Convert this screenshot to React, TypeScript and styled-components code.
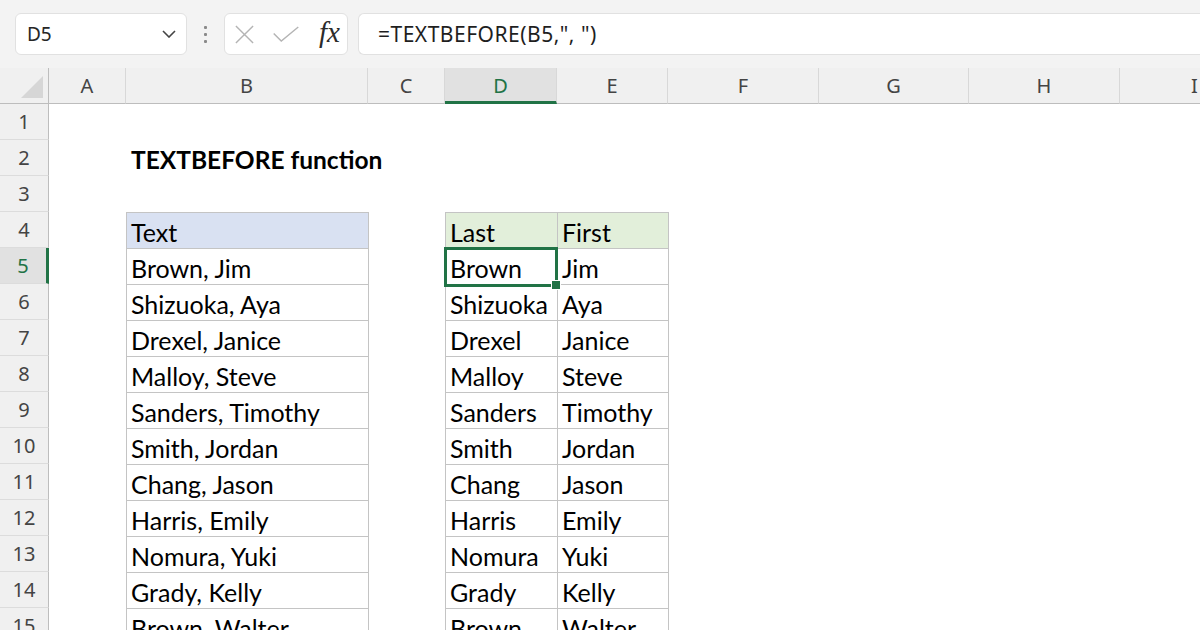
import React from "react";
import styled, { createGlobalStyle, css } from "styled-components";

const Global = createGlobalStyle`
  html, body { margin: 0; padding: 0; background: #ffffff; }
  body { overflow: hidden; }
  #root { width: 1200px; height: 630px; }
`;

const GREEN = "#217346";
const UI_FONT = `"Noto Sans", "Open Sans", "DejaVu Sans", sans-serif`;
const CELL_FONT = `Lato, "Noto Sans", sans-serif`;

const Frame = styled.div`
  width: 1200px;
  height: 630px;
  overflow: hidden;
  background: #ffffff;
  display: flex;
  flex-direction: column;
`;

const TopBar = styled.div`
  height: 68px;
  flex: none;
  box-sizing: border-box;
  background: #f3f3f3;
  display: flex;
  align-items: center;
  padding: 0 0 0 15px;
`;

const Box = styled.div`
  height: 42px;
  box-sizing: border-box;
  background: #ffffff;
  border: 1px solid #e1e1e1;
  border-radius: 6px;
  display: flex;
  align-items: center;
`;

const NameBox = styled(Box)`
  width: 172px;
  padding: 0 10px 0 11px;
  justify-content: space-between;
  font-family: ${UI_FONT};
  font-size: 19px;
  color: #262626;
`;

const Dots = styled.div`
  width: 37px;
  display: flex;
  flex-direction: column;
  align-items: center;
  gap: 4px;
  span {
    width: 3px;
    height: 3px;
    background: #8a8a8a;
    border-radius: 1px;
  }
`;

const FxBox = styled(Box)`
  width: 124px;
  padding: 0 7px 0 9px;
  gap: 17px;
  margin-right: 10px;
`;

const FxText = styled.span`
  font-family: "Liberation Serif", "DejaVu Serif", serif;
  font-style: italic;
  font-size: 29px;
  color: #2b2b2b;
  margin-left: auto;
  margin-top: -4px;
  letter-spacing: 0px;
`;

const FormulaBox = styled(Box)`
  flex: 1;
  border-right: none;
  border-radius: 6px 0 0 6px;
  padding-left: 19px;
  font-family: ${UI_FONT};
  font-size: 21px;
  color: #1f1f1f;
  letter-spacing: 0.5px;
`;

const Sheet = styled.div`
  display: grid;
  grid-template-columns: 49px 77px 242px 77px 112px 111px 151px 150px 151px 150px;
  grid-auto-rows: 36px;
  width: 1270px;
`;

const Corner = styled.div`
  position: relative;
  background: #f0f0f0;
  border-right: 1px solid #bdbdbd;
  border-bottom: 1px solid #bdbdbd;
  svg { position: absolute; right: 5px; bottom: 5px; }
`;

const ColHead = styled.div<{ $active?: boolean }>`
  background: ${(p) => (p.$active ? "#e1e1e1" : "#f0f0f0")};
  border-right: 1px solid #d8d8d8;
  border-bottom: ${(p) => (p.$active ? `3px solid ${GREEN}` : "1px solid #bdbdbd")};
  box-sizing: border-box;
  display: flex;
  align-items: center;
  justify-content: center;
  padding-top: ${(p) => (p.$active ? "2px" : "0")};
  font-family: ${UI_FONT};
  font-size: 20px;
  color: ${(p) => (p.$active ? GREEN : "#444444")};
`;

const RowHead = styled.div<{ $active?: boolean }>`
  background: ${(p) => (p.$active ? "#e1e1e1" : "#f0f0f0")};
  border-right: ${(p) => (p.$active ? `3px solid ${GREEN}` : "1px solid #bdbdbd")};
  border-bottom: 1px solid #dcdcdc;
  box-sizing: border-box;
  display: flex;
  align-items: center;
  justify-content: center;
  font-family: ${UI_FONT};
  font-size: 20px;
  color: ${(p) => (p.$active ? GREEN : "#444444")};
`;

type Variant = "none" | "plain" | "blue" | "green";

const Cell = styled.div<{ $variant: Variant; $bold?: boolean }>`
  position: relative;
  box-sizing: border-box;
  display: flex;
  align-items: center;
  padding: 2px 0 0 5px;
  white-space: nowrap;
  overflow: visible;
  font-family: ${CELL_FONT};
  font-size: ${(p) => (p.$bold ? "24.5px" : "25px")};
  font-weight: ${(p) => (p.$bold ? 700 : 400)};
  color: #000000;
  ${(p) =>
    p.$variant !== "none" &&
    css`
      border: 1px solid #c4c4c4;
      margin: 0 -1px -1px 0;
      padding-left: 4px;
      background: ${p.$variant === "blue"
        ? "#d9e1f2"
        : p.$variant === "green"
        ? "#e2efda"
        : "#ffffff"};
    `}
`;

const Selection = styled.div`
  position: absolute;
  left: -2px;
  top: -2px;
  width: 114px;
  height: 40px;
  box-sizing: border-box;
  border: 3px solid ${GREEN};
  z-index: 2;
  pointer-events: none;
`;

const Handle = styled.div`
  position: absolute;
  right: -6px;
  bottom: -6px;
  width: 8px;
  height: 8px;
  background: ${GREEN};
  border: 1px solid #ffffff;
`;

const COLS = ["A", "B", "C", "D", "E", "F", "G", "H", "I"];

const names: [string, string, string][] = [
  ["Brown, Jim", "Brown", "Jim"],
  ["Shizuoka, Aya", "Shizuoka", "Aya"],
  ["Drexel, Janice", "Drexel", "Janice"],
  ["Malloy, Steve", "Malloy", "Steve"],
  ["Sanders, Timothy", "Sanders", "Timothy"],
  ["Smith, Jordan", "Smith", "Jordan"],
  ["Chang, Jason", "Chang", "Jason"],
  ["Harris, Emily", "Harris", "Emily"],
  ["Nomura, Yuki", "Nomura", "Yuki"],
  ["Grady, Kelly", "Grady", "Kelly"],
  ["Brown, Walter", "Brown", "Walter"],
];

type CellInfo = { text?: string; variant: Variant; bold?: boolean };

function cellAt(row: number, col: string): CellInfo {
  if (row === 2 && col === "B") return { text: "TEXTBEFORE function", variant: "none", bold: true };
  if (row === 4) {
    if (col === "B") return { text: "Text", variant: "blue" };
    if (col === "D") return { text: "Last", variant: "green" };
    if (col === "E") return { text: "First", variant: "green" };
  }
  if (row >= 5 && row <= 15) {
    const r = names[row - 5];
    if (col === "B") return { text: r[0], variant: "plain" };
    if (col === "D") return { text: r[1], variant: "plain" };
    if (col === "E") return { text: r[2], variant: "plain" };
  }
  return { variant: "none" };
}

const ChevronIcon = () => (
  <svg width="14" height="8" viewBox="0 0 14 8" fill="none">
    <path d="M1 1 L7 7 L13 1" stroke="#444" strokeWidth="1.6" />
  </svg>
);

const CrossIcon = () => (
  <svg width="21" height="21" viewBox="0 0 22 22" fill="none">
    <path d="M2 2 L20 20 M20 2 L2 20" stroke="#b4b4b4" strokeWidth="1.5" />
  </svg>
);

const CheckIcon = () => (
  <svg width="28" height="17" viewBox="0 0 28 18" fill="none">
    <path d="M1 8 L9 16 L27 1" stroke="#b4b4b4" strokeWidth="1.5" />
  </svg>
);

export default function App() {
  const rows = Array.from({ length: 15 }, (_, i) => i + 1);
  return (
    <Frame>
      <Global />
      <TopBar>
        <NameBox>
          <span>D5</span>
          <ChevronIcon />
        </NameBox>
        <Dots>
          <span />
          <span />
          <span />
        </Dots>
        <FxBox>
          <CrossIcon />
          <CheckIcon />
          <FxText>fx</FxText>
        </FxBox>
        <FormulaBox>=TEXTBEFORE(B5,", ")</FormulaBox>
      </TopBar>
      <Sheet>
        <Corner>
          <svg width="22" height="22" viewBox="0 0 22 22">
            <polygon points="22,0 22,22 0,22" fill="#d6d6d6" />
          </svg>
        </Corner>
        {COLS.map((c) => (
          <ColHead key={c} $active={c === "D"}>
            {c}
          </ColHead>
        ))}
        {rows.map((r) => (
          <React.Fragment key={r}>
            <RowHead $active={r === 5}>{r}</RowHead>
            {COLS.map((c) => {
              const info = cellAt(r, c);
              return (
                <Cell key={c} $variant={info.variant} $bold={info.bold}>
                  {info.text}
                  {r === 5 && c === "D" && (
                    <Selection>
                      <Handle />
                    </Selection>
                  )}
                </Cell>
              );
            })}
          </React.Fragment>
        ))}
      </Sheet>
    </Frame>
  );
}
